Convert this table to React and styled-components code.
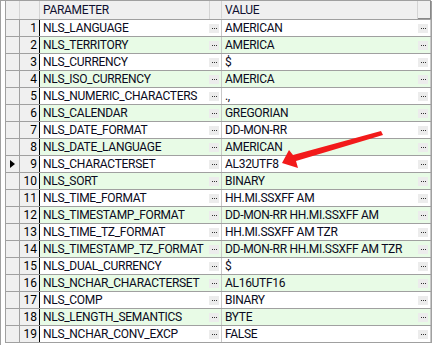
import React from 'react';
import styled, { createGlobalStyle } from 'styled-components';

const rows = [
    ['NLS_LANGUAGE', 'AMERICAN'],
    ['NLS_TERRITORY', 'AMERICA'],
    ['NLS_CURRENCY', '$'],
    ['NLS_ISO_CURRENCY', 'AMERICA'],
    ['NLS_NUMERIC_CHARACTERS', '.,'],
    ['NLS_CALENDAR', 'GREGORIAN'],
    ['NLS_DATE_FORMAT', 'DD-MON-RR'],
    ['NLS_DATE_LANGUAGE', 'AMERICAN'],
    ['NLS_CHARACTERSET', 'AL32UTF8'],
    ['NLS_SORT', 'BINARY'],
    ['NLS_TIME_FORMAT', 'HH.MI.SSXFF AM'],
    ['NLS_TIMESTAMP_FORMAT', 'DD-MON-RR HH.MI.SSXFF AM'],
    ['NLS_TIME_TZ_FORMAT', 'HH.MI.SSXFF AM TZR'],
    ['NLS_TIMESTAMP_TZ_FORMAT', 'DD-MON-RR HH.MI.SSXFF AM TZR'],
    ['NLS_DUAL_CURRENCY', '$'],
    ['NLS_NCHAR_CHARACTERSET', 'AL16UTF16'],
    ['NLS_COMP', 'BINARY'],
    ['NLS_LENGTH_SEMANTICS', 'BYTE'],
    ['NLS_NCHAR_CONV_EXCP', 'FALSE'],
];

const CURRENT = 9; // row with the record pointer

// little "..." button at the right of every cell
const EditButton = () => (
    <Dots>
        <Dot />
        <Dot />
        <Dot />
    </Dots>
);

function App() {
    return (
        <>
            <GlobalStyle />
            <Frame>
                <Grid>
                    <HeaderRow>
                        <HeadCell />
                        <HeadCell />
                        <HeadCell>PARAMETER</HeadCell>
                        <HeadButton />
                        <HeadCell>VALUE</HeadCell>
                        <HeadButton $last />
                    </HeaderRow>
                    {rows.map(([param, value], i) => (
                        <Row key={param} $even={i % 2 === 1}>
                            <Indicator>{i + 1 === CURRENT && <Pointer />}</Indicator>
                            <RowNum>{i + 1}</RowNum>
                            <Cell>
                                <CellText>{param}</CellText>
                                <EditButton />
                            </Cell>
                            <Cell>
                                <CellText>{value}</CellText>
                                <EditButton />
                            </Cell>
                        </Row>
                    ))}
                </Grid>
                <Arrow viewBox="0 0 106 40" width="106" height="40">
                    <path d="M2 33 L9 20 L13 25 L101 1 L103 5 L16 31 L18 38 Z" fill="#f21a1a" />
                </Arrow>
            </Frame>
        </>
    );
}

export default App;

const GlobalStyle = createGlobalStyle`
    html, body {
        margin: 0;
        background: #fff;
    }
    body {
        font-family: Roboto, "Liberation Sans", Arial, sans-serif;
        font-size: 12px;
        color: #000;
    }
`;

const Frame = styled.div`
    position: relative;
    width: 431px;
    height: 345px;
    border-top: 1px solid #a0a0a0;
    border-left: 1px solid #a0a0a0;
    padding-left: 4px;
    box-sizing: border-box;
`;

const Grid = styled.div`
    width: 427px;
    border-left: 1px solid #a0a0a0;
    border-right: 1px solid #a0a0a0;
    box-sizing: border-box;
`;

const HeaderRow = styled.div`
    display: grid;
    grid-template-columns: 14px 20px 170px 12px 196px 13px;
    height: 19px;
    background: #f0f0f0;
    border-bottom: 1px solid #a0a0a0;
    box-sizing: border-box;
`;

const HeadCell = styled.div`
    display: flex;
    align-items: center;
    padding-left: 3px;
    border-right: 1px solid #d4d4d4;
    color: #101030;
    letter-spacing: -0.3px;
`;

const HeadButton = styled.div`
    background: #f0f0f0;
    border-right: 1px solid ${p => (p.$last ? '#888' : '#d4d4d4')};
    border-bottom: 1px solid ${p => (p.$last ? '#888' : '#f0f0f0')};
`;

const Row = styled.div`
    display: grid;
    grid-template-columns: 14px 20px 182px 209px;
    height: 17px;
    background: ${p => (p.$even ? '#e8fbe6' : '#fff')};
    border-bottom: 1px solid #a0a0a0;
    box-sizing: border-box;
`;

const Indicator = styled.div`
    display: flex;
    align-items: center;
    justify-content: center;
    background: #f0f0f0;
    border-right: 1px solid #a0a0a0;
`;

const Pointer = styled.span`
    width: 0;
    height: 0;
    border-top: 4px solid transparent;
    border-bottom: 4px solid transparent;
    border-left: 5px solid #000;
`;

const RowNum = styled.div`
    display: flex;
    align-items: center;
    justify-content: flex-end;
    padding-right: 2px;
    background: #f0f0f0;
    border-right: 1px solid #000;
`;

const Cell = styled.div`
    display: flex;
    align-items: center;
    justify-content: space-between;
    padding-left: 3px;
    padding-right: 2px;
    border-right: 1px solid #c8c8c8;
    overflow: hidden;
`;

const CellText = styled.span`
    white-space: nowrap;
    color: #0a0a20;
    letter-spacing: -0.3px;
`;

const Dots = styled.span`
    flex: none;
    display: flex;
    align-items: center;
    justify-content: center;
    gap: 1px;
    width: 10px;
    height: 9px;
    background: #ececec;
`;

const Dot = styled.span`
    width: 1px;
    height: 1px;
    background: #333;
`;

const Arrow = styled.svg`
    position: absolute;
    left: 279px;
    top: 129px;
`;
